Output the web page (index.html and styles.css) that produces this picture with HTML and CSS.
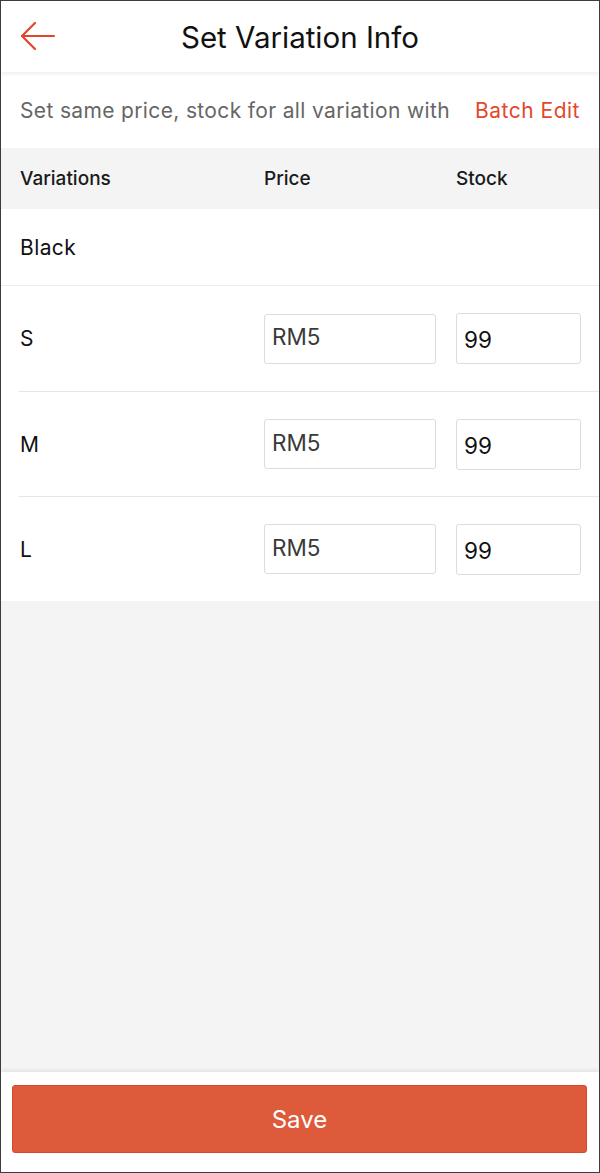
FILE: index.html
```html
<!DOCTYPE html>
<html lang="en">
<head>
<meta charset="utf-8">
<title>Set Variation Info</title>
<link rel="stylesheet" href="styles.css">
</head>
<body>
<div class="screen">
  <header class="topbar">
    <button class="back" aria-label="Back">
      <svg width="36" height="30" viewBox="0 0 36 30" fill="none" stroke="#e2462a" stroke-width="2.2" stroke-linecap="round" stroke-linejoin="round">
        <path d="M2 15 H34"/>
        <path d="M15 2 L2 15 L15 28"/>
      </svg>
    </button>
    <h1 class="title">Set Variation Info</h1>
  </header>
  <div class="batch">
    <span class="batch-text">Set same price, stock for all variation with</span>
    <a class="batch-link" href="#">Batch Edit</a>
  </div>
  <div class="grid thead">
    <span>Variations</span>
    <span>Price</span>
    <span>Stock</span>
  </div>
  <div class="group">
    <div class="group-name">Black</div>
    <div class="grid row">
      <span class="size">S</span>
      <div class="field price">RM5</div>
      <div class="field stock">99</div>
    </div>
    <div class="grid row">
      <span class="size">M</span>
      <div class="field price">RM5</div>
      <div class="field stock">99</div>
    </div>
    <div class="grid row">
      <span class="size">L</span>
      <div class="field price">RM5</div>
      <div class="field stock">99</div>
    </div>
  </div>
  <div class="spacer"></div>
  <footer class="bottombar">
    <button class="save">Save</button>
  </footer>
</div>
</body>
</html>
```
FILE: styles.css
```css
* { box-sizing: border-box; }
html, body { margin: 0; padding: 0; }
body {
  font-family: Inter, Roboto, "Liberation Sans", Arial, sans-serif;
  background: #fff;
}
.screen {
  width: 600px;
  height: 1173px;
  border: 1px solid #3c3c3c;
  background: #f4f4f4;
  display: flex;
  flex-direction: column;
  overflow: hidden;
}
.topbar {
  position: relative;
  z-index: 2;
  height: 71px;
  background: #fff;
  display: flex;
  align-items: center;
  justify-content: center;
  box-shadow: 0 2px 4px rgba(0,0,0,0.07);
  flex: none;
}
.back {
  position: absolute;
  left: 19px;
  top: 20px;
  padding: 0;
  border: 0;
  background: none;
  line-height: 0;
}
.title {
  margin: 0;
  font-size: 29.5px;
  font-weight: 400;
  color: #111;
}
.batch {
  flex: none;
  height: 76px;
  background: #fff;
  display: flex;
  align-items: center;
  justify-content: space-between;
  padding: 0 19px 0 19px;
  font-size: 21px;
  letter-spacing: 0.35px;
}
.batch-text { color: #666; }
.batch-link { color: #e4472b; text-decoration: none; letter-spacing: 0.5px; }
.grid {
  display: grid;
  grid-template-columns: 1fr 172px 125px;
  column-gap: 20px;
  padding: 0 18px 0 19px;
  align-items: center;
}
.thead {
  flex: none;
  height: 61px;
  background: #f4f4f4;
  font-size: 19px;
  font-weight: 500;
  color: #1a1a1a;
}
.group {
  flex: none;
  background: #fff;
}
.group-name {
  height: 77px;
  display: flex;
  align-items: center;
  padding-left: 19px;
  font-size: 21px;
  letter-spacing: 0.4px;
  color: #111;
  border-bottom: 1px solid #ececec;
}
.row {
  height: 105px;
  font-size: 21px;
  color: #111;
}
.row + .row { border-top: 1px solid #e6e6e6; margin-left: 18px; padding-left: 1px; }
.field {
  height: 50px;
  border: 1px solid #dcdcdc;
  border-radius: 3px;
  display: flex;
  align-items: center;
  padding-left: 7px;
  font-size: 22.5px;
}
.price { color: #3a3a3a; padding-bottom: 4px; }
.stock { color: #111; height: 51px; padding-top: 2px; }
.spacer { flex: 1; }
.bottombar {
  flex: none;
  height: 100px;
  background: #fff;
  box-shadow: 0 -2px 4px rgba(0,0,0,0.07);
  padding: 13px 12px 18px 11px;
}
.save {
  width: 100%;
  height: 68px;
  border: 1px solid #d9482a;
  border-radius: 3px;
  background: #dd5a3a;
  color: #fff;
  font-family: inherit;
  font-size: 24px;
  font-weight: 400;
}
```
